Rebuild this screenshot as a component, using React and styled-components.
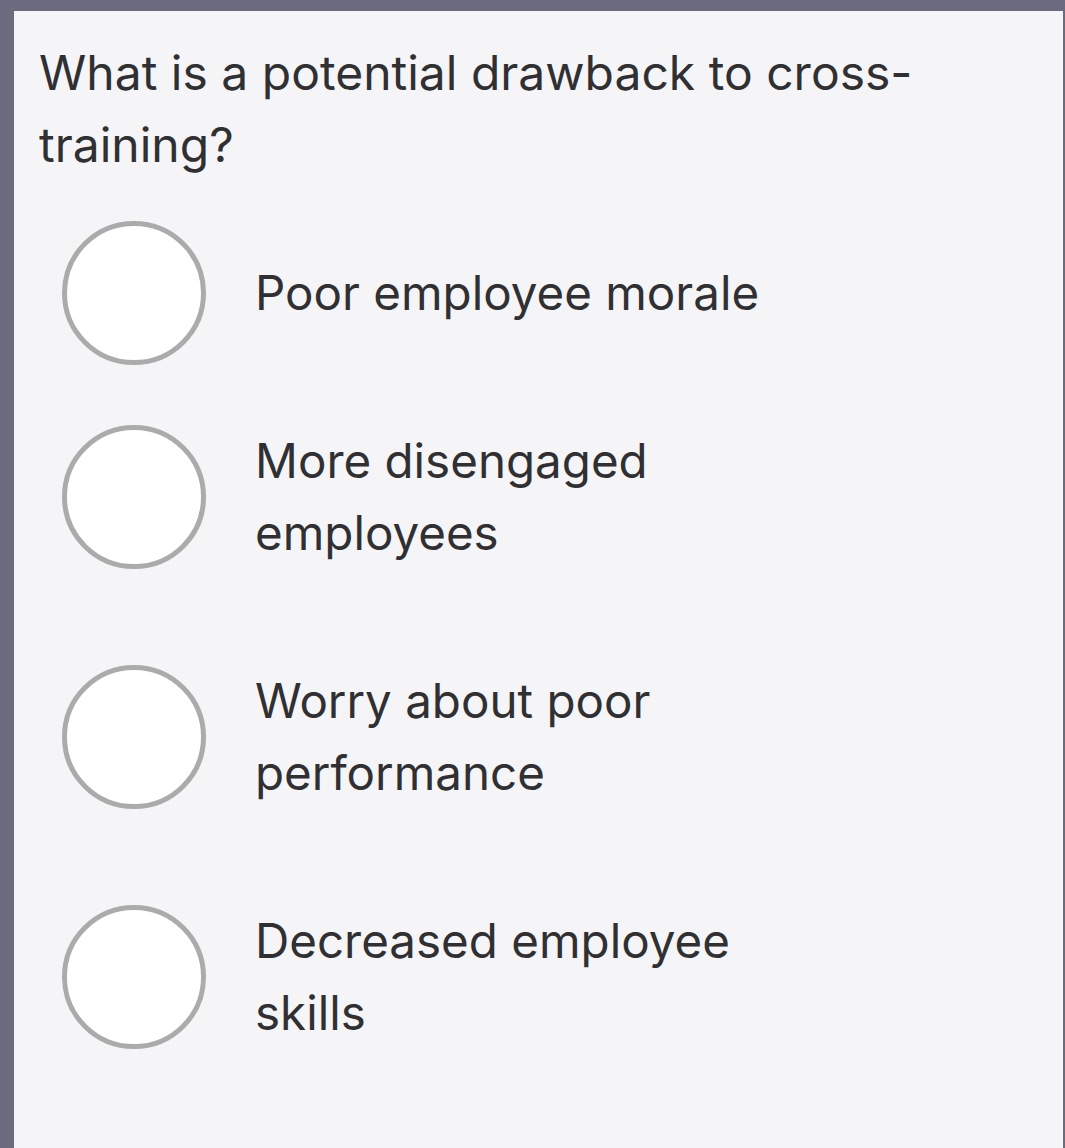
import React from 'react';
import styled, { createGlobalStyle } from 'styled-components';

const GlobalStyle = createGlobalStyle`
    html, body {
        margin: 0;
        padding: 0;
        background: #f5f5f7;
    }
`

const Card = styled.div`
    box-sizing: border-box;
    min-height: 1148px;
    background: #f5f5f7;
    border-top: 11px solid #6b6a7e;
    border-left: 14px solid #6b6a7e;
    border-right: 2px solid #6b6a7e;
    padding: 26px 25px 40px 25px;
    font-family: Inter, "Noto Sans", sans-serif;
    color: #303033;
`

const Question = styled.h2`
    margin: 0;
    font-size: 48px;
    font-weight: 400;
    line-height: 72px;
    max-width: 900px;
`

const OptionList = styled.div`
    margin-top: 40px;
    display: flex;
    flex-direction: column;
    gap: 24px;
`

const Option = styled.label`
    display: flex;
    align-items: center;
    gap: 49px;
    padding-left: 23px;
    cursor: pointer;
`

const Radio = styled.span`
    box-sizing: border-box;
    flex: none;
    width: 144px;
    height: 144px;
    border-radius: 50%;
    border: 5px solid #ababab;
    background: #ffffff;
`

const OptionText = styled.span`
    font-size: 47.5px;
    line-height: 72px;
    padding: 36px 0;
    max-width: 510px;
`

const options = [
    'Poor employee morale',
    'More disengaged employees',
    'Worry about poor performance',
    'Decreased employee skills',
]

function App() {
    return (
        <>
            <GlobalStyle />
            <Card>
                <Question>What is a potential drawback to cross-training?</Question>
                <OptionList>
                    {options.map((o) => (
                        <Option key={o}>
                            <Radio />
                            <OptionText>{o}</OptionText>
                        </Option>
                    ))}
                </OptionList>
            </Card>
        </>
    );
}

export default App;
